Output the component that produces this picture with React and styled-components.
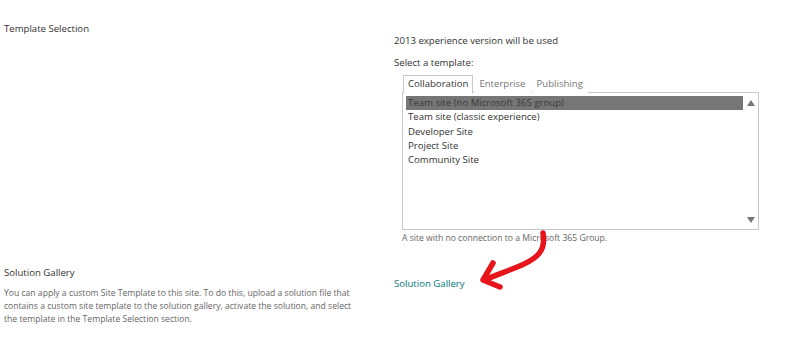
import styled, { createGlobalStyle } from 'styled-components';

const GlobalStyle = createGlobalStyle`
  body {
    margin: 0;
    background: #fff;
    font-family: "Open Sans", "Noto Sans", sans-serif;
    color: #333;
  }
`;

const Page = styled.div`
  position: relative;
  width: 800px;
  height: 364px;
  overflow: hidden;
`;

const Section = styled.div`
  display: grid;
  grid-template-columns: 394px 1fr;
  padding-top: ${(p) => p.top}px;
`;

const Label = styled.div`
  padding-left: 4px;
  font-size: 9.6px;
  line-height: 14px;
  color: #333;
`;

const LabelBox = styled.div`
  display: flex;
  flex-direction: column;
  gap: 7px;
`;

const Description = styled.div`
  padding-left: 4px;
  font-size: 8.6px;
  line-height: 13px;
  color: #666;
  width: 360px;
`;

const Field = styled.div`
  display: flex;
  flex-direction: column;
  padding-top: ${(p) => p.top || 0}px;
`;

const Text = styled.div`
  font-size: 9.6px;
  line-height: 14px;
  color: #333;
  margin-bottom: ${(p) => p.mb || 0}px;
`;

const Tabs = styled.div`
  display: flex;
  margin-left: 9px;
  height: 17px;
`;

const Tab = styled.div`
  font-size: 9.6px;
  line-height: 16px;
  padding: 0 4px;
  margin-right: 1px;
  color: ${(p) => (p.active ? '#333' : '#777')};
  border: 1px solid ${(p) => (p.active ? '#c8c8c8' : 'transparent')};
  border-bottom: none;
  background: #fff;
  position: relative;
  margin-bottom: -1px;
  z-index: 1;
`;

const ListBox = styled.div`
  margin-left: 8px;
  width: 357px;
  height: 138px;
  border: 1px solid #c8c8c8;
  display: flex;
  padding: 3px 0 0 3px;
  box-sizing: border-box;
`;

const Items = styled.div`
  flex: 1;
  display: flex;
  flex-direction: column;
`;

const Item = styled.div`
  font-size: 9.6px;
  line-height: 14.3px;
  padding-left: 2px;
  color: ${(p) => (p.selected ? '#3a3a3a' : '#333')};
  background: ${(p) => (p.selected ? '#767676' : 'transparent')};
`;

const Scrollbar = styled.div`
  width: 15px;
  display: flex;
  flex-direction: column;
  justify-content: space-between;
  align-items: center;
  padding: 4px 0 6px;
`;

const Arrow = styled.div`
  width: 0;
  height: 0;
  border-left: 4px solid transparent;
  border-right: 4px solid transparent;
  ${(p) =>
    p.up
      ? 'border-bottom: 6px solid #777;'
      : 'border-top: 6px solid #777;'}
`;

const Hint = styled.div`
  margin-left: 8px;
  margin-top: 2px;
  font-size: 8.6px;
  line-height: 13px;
  color: #666;
`;

const Link = styled.a`
  font-size: 9.6px;
  line-height: 14px;
  color: #03787c;
  text-decoration: none;
`;

const Overlay = styled.svg`
  position: absolute;
  left: 0;
  top: 0;
  pointer-events: none;
`;

const templates = [
  'Team site (no Microsoft 365 group)',
  'Team site (classic experience)',
  'Developer Site',
  'Project Site',
  'Community Site',
];

export default function App() {
  return (
    <Page>
      <GlobalStyle />
      <Section top={22}>
        <Label>Template Selection</Label>
        <Field top={12}>
          <Text mb={8}>2013 experience version will be used</Text>
          <Text mb={5}>Select a template:</Text>
          <Tabs>
            <Tab active>Collaboration</Tab>
            <Tab>Enterprise</Tab>
            <Tab>Publishing</Tab>
          </Tabs>
          <ListBox>
            <Items>
              {templates.map((t, i) => (
                <Item key={t} selected={i === 0}>
                  {t}
                </Item>
              ))}
            </Items>
            <Scrollbar>
              <Arrow up />
              <Arrow />
            </Scrollbar>
          </ListBox>
          <Hint>A site with no connection to a Microsoft 365 Group.</Hint>
        </Field>
      </Section>
      <Section top={21}>
        <LabelBox>
          <Label>Solution Gallery</Label>
          <Description>
            You can apply a custom Site Template to this site. To do this, upload a solution file that
            contains a custom site template to the solution gallery, activate the solution, and select
            the template in the Template Selection section.
          </Description>
        </LabelBox>
        <Field top={11}>
          <Link href="#">Solution Gallery</Link>
        </Field>
      </Section>
      <Overlay width="800" height="364" viewBox="0 0 800 364">
        <path
          d="M543 233 C546 250 538 258 522 265 C508 271 496 275 484 280"
          fill="none"
          stroke="#e8141b"
          strokeWidth="5.5"
          strokeLinecap="round"
        />
        <path
          d="M493 263 L483 280 L500 287"
          fill="none"
          stroke="#e8141b"
          strokeWidth="5.5"
          strokeLinecap="round"
          strokeLinejoin="round"
        />
      </Overlay>
    </Page>
  );
}
